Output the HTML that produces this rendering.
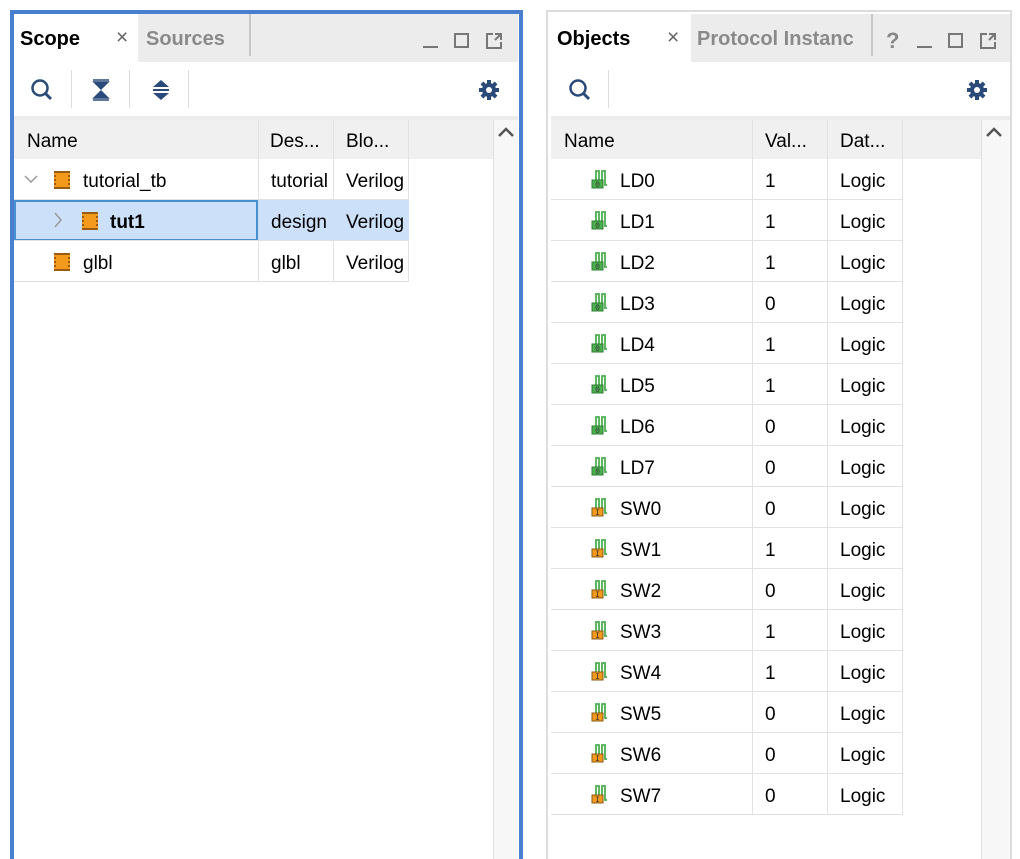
<!DOCTYPE html>
<html><head><meta charset="utf-8"><style>
*{box-sizing:border-box;margin:0;padding:0}
body{width:1020px;height:859px;background:#fff;font-family:"Liberation Sans","DejaVu Sans",sans-serif;position:relative;overflow:hidden;color:#000}
.a{position:absolute}
.tabbar{background:#ececec}
.hdr{background:#f0f0f0;font-size:19px}
.row{position:absolute;height:41px;border-bottom:1px solid #e2e2e2;font-size:19px;line-height:41px}
.chip{position:absolute;width:16px;height:18px;background:#f39a1c;border:2px solid #9a5a10;border-left-style:dotted;border-right-style:dotted}
</style></head><body>
<!-- LEFT PANEL -->
<div class="a" style="left:10px;top:10px;width:513px;height:849px;border:4px solid #4a7fcf;border-bottom:none;background:#fff"></div>
<div class="a tabbar" style="left:14px;top:14px;width:504px;height:48px"></div>
<div class="a" style="left:14px;top:14px;width:124px;height:48px;background:#fff"></div>
<div class="a" style="left:20px;top:28px;font-size:20px;font-weight:bold">Scope</div>
<div class="a" style="left:116px;top:26px;font-size:21px;color:#666">×</div>
<div class="a" style="left:146px;top:28px;font-size:20px;font-weight:bold;color:#8a8a8a">Sources</div>
<div class="a" style="left:249px;top:14px;width:2px;height:42px;background:#c8c8c8"></div>
<div class="a" style="left:423px;top:46px;width:15px;height:2px;background:#777"></div>
<div class="a" style="left:454px;top:33px;width:15px;height:15px;border:2px solid #777"></div>
<svg class="a" style="left:485px;top:32px" width="18" height="18"><path d="M8 2H2V16H16V10" fill="none" stroke="#777" stroke-width="2"/><path d="M10 2H16V8M16 2L10 8" fill="none" stroke="#777" stroke-width="2"/></svg>
<svg class="a" style="left:30px;top:78px" width="26" height="24"><circle cx="10" cy="10" r="7.5" fill="none" stroke="#2a4a7a" stroke-width="2.5"/><path d="M15 15L21 21" stroke="#2a4a7a" stroke-width="3"/></svg>
<div class="a" style="left:71px;top:70px;width:1px;height:38px;background:#ddd"></div>
<svg class="a" style="left:90px;top:78px" width="22" height="24"><path d="M3 2H19M4 4H18L11 11Z M4 20H18L11 13Z M3 22H19" fill="#2a4a7a" stroke="#2a4a7a" stroke-width="1.5"/></svg>
<div class="a" style="left:129px;top:70px;width:1px;height:38px;background:#ddd"></div>
<svg class="a" style="left:150px;top:78px" width="22" height="24"><path d="M3 9L11 2L19 9Z M3 15L11 22L19 15Z" fill="#2a4a7a"/><path d="M3 12H19" stroke="#2a4a7a" stroke-width="2"/></svg>
<div class="a" style="left:188px;top:70px;width:1px;height:38px;background:#ddd"></div>
<svg class="a" style="left:478px;top:79px" width="22" height="22" viewBox="0 0 22 22"><g fill="#2a4a7a"><circle cx="11" cy="11" r="7"/><rect x="9" y="1" width="4" height="20"/><rect x="1" y="9" width="20" height="4"/><rect x="9" y="1" width="4" height="20" transform="rotate(45 11 11)"/><rect x="9" y="1" width="4" height="20" transform="rotate(-45 11 11)"/></g><circle cx="11" cy="11" r="3" fill="#fff"/></svg>
<div class="a" style="left:14px;top:116px;width:504px;height:4px;background:#ececec"></div>
<div class="a hdr" style="left:14px;top:120px;width:480px;height:39px"></div>
<div class="a" style="left:258px;top:120px;width:1px;height:162px;background:#e2e2e2"></div>
<div class="a" style="left:333px;top:120px;width:1px;height:162px;background:#e2e2e2"></div>
<div class="a" style="left:408px;top:120px;width:1px;height:162px;background:#e2e2e2"></div>
<div class="a" style="left:27px;top:131px;font-size:19px">Name</div>
<div class="a" style="left:270px;top:131px;font-size:19px">Des...</div>
<div class="a" style="left:346px;top:131px;font-size:19px">Blo...</div>
<div class="a" style="left:493px;top:120px;width:25px;height:739px;background:#f7f7f7;border-left:1px solid #e2e2e2"></div>
<svg class="a" style="left:497px;top:126px" width="18" height="12"><path d="M2 10L9 3L16 10" fill="none" stroke="#555" stroke-width="2.5"/></svg>
<div class="row" style="left:14px;top:159px;width:395px"></div>
<svg class="a" style="left:24px;top:174px" width="14" height="10"><path d="M1 2L7 8L13 2" fill="none" stroke="#999" stroke-width="1.5"/></svg>
<div class="chip" style="left:54px;top:171px"></div>
<div class="a" style="left:83px;top:171px;font-size:19px">tutorial_tb</div>
<div class="a" style="left:271px;top:171px;font-size:19px;width:62px;overflow:hidden">tutorial</div>
<div class="a" style="left:346px;top:171px;font-size:19px;width:62px;overflow:hidden">Verilog</div>
<div class="a" style="left:14px;top:200px;width:395px;height:41px;background:#cce0fa"></div>
<div class="a" style="left:14px;top:200px;width:244px;height:41px;border:2px solid #4a90d0"></div>
<svg class="a" style="left:53px;top:212px" width="10" height="16"><path d="M2 1L8 8L2 15" fill="none" stroke="#999" stroke-width="1.5"/></svg>
<div class="chip" style="left:82px;top:212px"></div>
<div class="a" style="left:110px;top:212px;font-size:19px;font-weight:bold">tut1</div>
<div class="a" style="left:271px;top:212px;font-size:19px;width:62px;overflow:hidden">design</div>
<div class="a" style="left:346px;top:212px;font-size:19px;width:62px;overflow:hidden">Verilog</div>
<div class="a" style="left:14px;top:240px;width:395px;height:1px;background:#e2e2e2"></div>
<div class="row" style="left:14px;top:241px;width:395px"></div>
<div class="chip" style="left:54px;top:253px"></div>
<div class="a" style="left:83px;top:253px;font-size:19px">glbl</div>
<div class="a" style="left:271px;top:253px;font-size:19px">glbl</div>
<div class="a" style="left:346px;top:253px;font-size:19px;width:62px;overflow:hidden">Verilog</div>

<!-- RIGHT PANEL -->
<div class="a" style="left:546px;top:10px;width:466px;height:849px;border:2px solid #dcdcdc;border-bottom:none;background:#fff"></div>
<div class="a tabbar" style="left:551px;top:14px;width:459px;height:48px"></div>
<div class="a" style="left:551px;top:14px;width:140px;height:48px;background:#fff"></div>
<div class="a" style="left:557px;top:28px;font-size:20px;font-weight:bold">Objects</div>
<div class="a" style="left:667px;top:26px;font-size:21px;color:#666">×</div>
<div class="a" style="left:697px;top:28px;font-size:20px;font-weight:bold;color:#8a8a8a">Protocol Instanc</div>
<div class="a" style="left:871px;top:14px;width:2px;height:42px;background:#c8c8c8"></div>
<div class="a" style="left:886px;top:28px;font-size:22px;font-weight:bold;color:#888">?</div>
<div class="a" style="left:917px;top:46px;width:15px;height:2px;background:#777"></div>
<div class="a" style="left:948px;top:33px;width:15px;height:15px;border:2px solid #777"></div>
<svg class="a" style="left:979px;top:32px" width="18" height="18"><path d="M8 2H2V16H16V10" fill="none" stroke="#777" stroke-width="2"/><path d="M10 2H16V8M16 2L10 8" fill="none" stroke="#777" stroke-width="2"/></svg>
<svg class="a" style="left:568px;top:78px" width="26" height="24"><circle cx="10" cy="10" r="7.5" fill="none" stroke="#2a4a7a" stroke-width="2.5"/><path d="M15 15L21 21" stroke="#2a4a7a" stroke-width="3"/></svg>
<div class="a" style="left:608px;top:70px;width:1px;height:38px;background:#ddd"></div>
<svg class="a" style="left:966px;top:79px" width="22" height="22" viewBox="0 0 22 22"><g fill="#2a4a7a"><circle cx="11" cy="11" r="7"/><rect x="9" y="1" width="4" height="20"/><rect x="1" y="9" width="20" height="4"/><rect x="9" y="1" width="4" height="20" transform="rotate(45 11 11)"/><rect x="9" y="1" width="4" height="20" transform="rotate(-45 11 11)"/></g><circle cx="11" cy="11" r="3" fill="#fff"/></svg>
<div class="a" style="left:551px;top:116px;width:459px;height:4px;background:#ececec"></div>
<div class="a hdr" style="left:551px;top:120px;width:430px;height:39px"></div>
<div class="a" style="left:752px;top:120px;width:1px;height:695px;background:#e2e2e2"></div>
<div class="a" style="left:827px;top:120px;width:1px;height:695px;background:#e2e2e2"></div>
<div class="a" style="left:902px;top:120px;width:1px;height:695px;background:#e2e2e2"></div>
<div class="a" style="left:564px;top:131px;font-size:19px">Name</div>
<div class="a" style="left:765px;top:131px;font-size:19px">Val...</div>
<div class="a" style="left:840px;top:131px;font-size:19px">Dat...</div>
<div class="a" style="left:981px;top:120px;width:29px;height:739px;background:#f7f7f7;border-left:1px solid #e2e2e2"></div>
<svg class="a" style="left:985px;top:126px" width="18" height="12"><path d="M2 10L9 3L16 10" fill="none" stroke="#555" stroke-width="2.5"/></svg>
<div id="rows"></div>
<script>
var d=[["LD0",1],["LD1",1],["LD2",1],["LD3",0],["LD4",1],["LD5",1],["LD6",0],["LD7",0],["SW0",0],["SW1",1],["SW2",0],["SW3",1],["SW4",1],["SW5",0],["SW6",0],["SW7",0]];
var h="";
d.forEach(function(r,i){var t=159+i*41;var sw=r[0][0]=="S";
var fill=sw?"#f39a1c":"#4caf50",stroke=sw?"#8a5a10":"#2e7d32",lab=sw?"I":"0";
h+='<div class="a" style="left:551px;top:'+(t+40)+'px;width:352px;height:1px;background:#e2e2e2"></div>';
h+='<svg class="a" style="left:591px;top:'+(t+11)+'px" width="18" height="20"><path d="M5 11V1H8V15H11V1H14V15H16" fill="none" stroke="#4caf50" stroke-width="1.8"/><rect x="1" y="10" width="11" height="8" fill="'+fill+'" stroke="'+stroke+'"/><text x="6.5" y="17" font-size="8" font-family=\'Liberation Mono\' text-anchor="middle" fill="#333">'+lab+'</text></svg>';
h+='<div class="a" style="left:620px;top:'+(t+12)+'px;font-size:19px">'+r[0]+'</div>';
h+='<div class="a" style="left:765px;top:'+(t+12)+'px;font-size:19px">'+r[1]+'</div>';
h+='<div class="a" style="left:840px;top:'+(t+12)+'px;font-size:19px">Logic</div>';});
document.getElementById("rows").innerHTML=h;
</script>
</body></html>
